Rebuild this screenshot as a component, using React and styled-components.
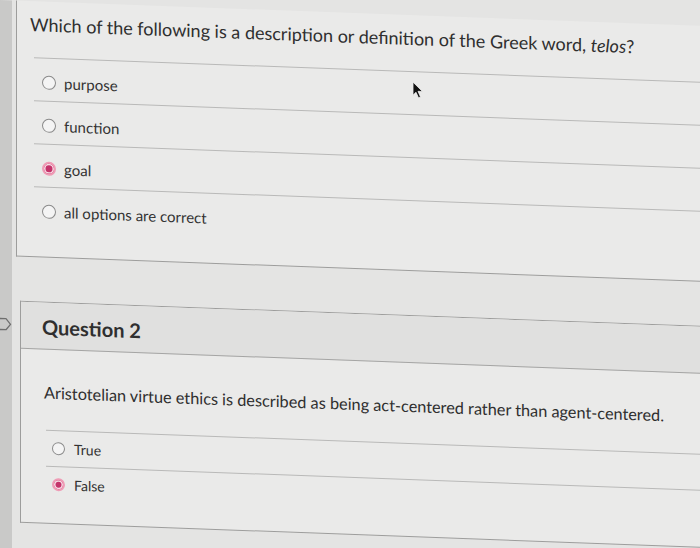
import React from 'react'
import styled, { createGlobalStyle } from 'styled-components'

const GlobalStyle = createGlobalStyle`
  html, body {
    margin: 0;
    padding: 0;
    width: 700px;
    height: 548px;
    overflow: hidden;
    background: #e4e4e3;
  }
  body {
    font-family: Lato, "Open Sans", "Liberation Sans", sans-serif;
    color: #333;
  }
`

const Page = styled.div`
  position: relative;
  width: 760px;
  height: 600px;
  background: linear-gradient(to right, #c9c9c8 0 12px, #e4e4e3 12px);
  transform: skewY(2.1deg);
  transform-origin: 0 0;
`

const QuestionRow = styled.div`
  display: flex;
  align-items: flex-start;
  margin-top: ${(p) => p.gap || 0}px;
`

const Gutter = styled.div`
  flex: 0 0 ${(p) => p.width}px;
  padding-top: ${(p) => p.flagTop || 0}px;
`

const Card = styled.div`
  flex: 1;
  background: #eaeae9;
  border: 1px solid #9d9d9c;
  border-top: ${(p) => (p.open ? 'none' : '1px solid #9d9d9c')};
  border-right: none;
  padding-bottom: ${(p) => p.bottom}px;
`

const Header = styled.div`
  height: 47px;
  display: flex;
  align-items: center;
  padding: 1px 0 0 21px;
  box-sizing: border-box;
  background: #e0e0df;
  border-bottom: 1px solid #a5a5a4;
  font-size: 20px;
  font-weight: 700;
  color: #2f2f2f;
`

const Prompt = styled.div`
  padding: ${(p) => p.top}px 0 0 ${(p) => p.left}px;
  margin-bottom: ${(p) => p.after}px;
  font-size: ${(p) => p.size}px;
  line-height: 24px;
  white-space: nowrap;
  color: #2f2f2f;

  em {
    font-style: italic;
  }
`

const Answers = styled.div`
  margin-left: ${(p) => p.left}px;
`

const Answer = styled.label`
  display: flex;
  align-items: center;
  box-sizing: border-box;
  gap: ${(p) => p.gap}px;
  height: ${(p) => p.height}px;
  padding: ${(p) => p.lift}px 0 0 ${(p) => p.indent}px;
  border-top: 1px solid #b9b9b8;
  font-size: ${(p) => p.size}px;
  color: #333;
`

const Radio = styled.span`
  flex: 0 0 auto;
  box-sizing: border-box;
  width: ${(p) => p.size}px;
  height: ${(p) => p.size}px;
  border-radius: 50%;
  border: ${(p) => (p.checked ? '2px solid #ef9cb6' : '1px solid #8a8a8a')};
  background: ${(p) => (p.checked ? '#c4336a' : '#f4f4f4')};
  box-shadow: ${(p) => (p.checked ? 'inset 0 0 0 1.5px #f7dbe4' : 'none')};
`

const Cursor = styled.svg`
  position: absolute;
  left: 412px;
  top: 66px;
`

const FlagIcon = () => (
  <svg width="12" height="14" viewBox="0 0 12 14">
    <path d="M-2 1.5 H6 L10.5 7 L6 12.5 H-2" fill="none" stroke="#6e6e6e" strokeWidth="1.3" strokeLinejoin="round" />
  </svg>
)

const Option = ({ label, checked, q }) => (
  <Answer
    height={q === 1 ? 43 : 36}
    lift={q === 1 ? 5 : 0}
    indent={q === 1 ? 8 : 6}
    gap={q === 1 ? 8 : 9}
    size={q === 1 ? 15 : 14}
  >
    <Radio checked={checked} size={q === 1 ? 14 : 13} />
    {label}
  </Answer>
)

export default function App() {
  return (
    <>
      <GlobalStyle />
      <Page>
        <QuestionRow>
          <Gutter width={16} />
          <Card open bottom={27}>
            <Prompt top={11} left={13} after={21} size={18}>
              Which of the following is a description or definition of the Greek word, <em>telos</em>?
            </Prompt>
            <Answers left={17}>
              <Option q={1} label="purpose" />
              <Option q={1} label="function" />
              <Option q={1} label="goal" checked />
              <Option q={1} label="all options are correct" />
            </Answers>
          </Card>
        </QuestionRow>

        <QuestionRow gap={44}>
          <Gutter width={20} flagTop={15}>
            <FlagIcon />
          </Gutter>
          <Card bottom={21}>
            <Header>Question 2</Header>
            <Prompt top={31} left={23} after={25} size={16.3}>
              Aristotelian virtue ethics is described as being act-centered rather than agent-centered.
            </Prompt>
            <Answers left={25}>
              <Option q={2} label="True" />
              <Option q={2} label="False" checked />
            </Answers>
          </Card>
        </QuestionRow>

        <Cursor width="12" height="18" viewBox="0 0 12 18">
          <path d="M1 1 L1 14 L4 11 L6.5 16.5 L8.5 15.5 L6 10 L10.5 10 Z" fill="#111" stroke="#eee" strokeWidth="0.8" />
        </Cursor>
      </Page>
    </>
  )
}
